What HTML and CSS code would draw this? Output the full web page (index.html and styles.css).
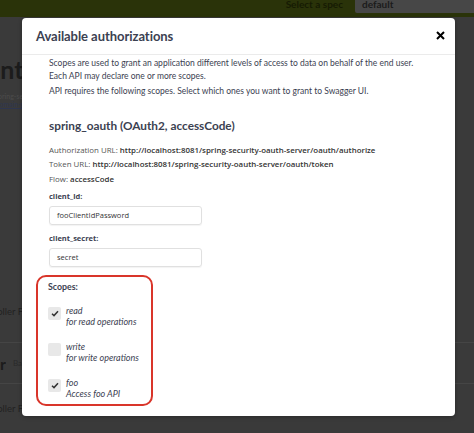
FILE: index.html
```html
<!DOCTYPE html>
<html lang="en">
<head>
<meta charset="utf-8">
<title>Available authorizations</title>
<link rel="stylesheet" href="styles.css">
</head>
<body>
<div class="page">
  <header class="topbar">
    <div class="spec">
      <span class="spec-label">Select a spec</span>
      <span class="spec-select">default</span>
    </div>
  </header>
  <main class="content">
    <section class="info">
      <h2 class="info-title">Maintenance</h2>
      <p class="info-base">[ Base URL: spring-security-oauth-resource/ ]</p>
      <a class="info-link">http://www.domain-page.com</a>
    </section>
    <section class="tags">
      <div class="tag tag-first"><span class="tag-desc">foo-controller Foo Controller</span></div>
      <div class="tag"><span class="tag-name">Reader</span><span class="tag-small">Bar Controller</span></div>
      <div class="tag tag-last"><span class="tag-desc">foo-controller Foo Controller</span></div>
    </section>
  </main>
</div>

<div class="modal">
  <div class="modal-header">
    <h3 class="modal-title">Available authorizations</h3>
    <button class="close" aria-label="close">
      <svg width="9" height="9" viewBox="0 0 9 9"><path d="M1 1 L8 8 M8 1 L1 8" stroke="#000" stroke-width="2" stroke-linecap="butt"/></svg>
    </button>
  </div>
  <div class="modal-body">
    <p class="desc">Scopes are used to grant an application different levels of access to data on behalf of the end user. Each API may declare one or more scopes.</p>
    <p class="desc desc-2">API requires the following scopes. Select which ones you want to grant to Swagger UI.</p>

    <h4 class="scheme">spring_oauth (OAuth2, accessCode)</h4>
    <p class="meta">Authorization URL: <code>http://localhost:8081/spring-security-oauth-server/oauth/authorize</code></p>
    <p class="meta">Token URL: <code>http://localhost:8081/spring-security-oauth-server/oauth/token</code></p>
    <p class="meta">Flow: <code>accessCode</code></p>

    <label class="field-label">client_id:</label>
    <div class="input">fooClientIdPassword</div>
    <label class="field-label">client_secret:</label>
    <div class="input">secret</div>

    <div class="scopes">
      <h5 class="scopes-title">Scopes:</h5>
      <div class="scope">
        <span class="check checked"><svg width="8" height="7" viewBox="0 0 8 7"><path d="M1 3.8 L3 5.6 L7 1.2" fill="none" stroke="#333" stroke-width="1.5"/></svg></span>
        <div class="scope-text"><span>read</span><span>for read operations</span></div>
      </div>
      <div class="scope">
        <span class="check"></span>
        <div class="scope-text"><span>write</span><span>for write operations</span></div>
      </div>
      <div class="scope">
        <span class="check checked"><svg width="8" height="7" viewBox="0 0 8 7"><path d="M1 3.8 L3 5.6 L7 1.2" fill="none" stroke="#333" stroke-width="1.5"/></svg></span>
        <div class="scope-text"><span>foo</span><span>Access foo API</span></div>
      </div>
    </div>
  </div>
</div>
</body>
</html>
```
FILE: styles.css
```css
* { box-sizing: border-box; }
html, body { margin: 0; padding: 0; }
body {
  width: 474px;
  height: 433px;
  overflow: hidden;
  background: #3a3a3a;
  font-family: "Lato", "Open Sans", sans-serif;
  position: relative;
}
.page { width: 474px; height: 433px; }
.topbar {
  height: 17px;
  background: #2a3309;
  display: flex;
  justify-content: flex-end;
}
.spec { display: flex; align-items: flex-start; height: 13px; }
.spec-label {
  font-size: 10px;
  font-weight: 700;
  color: #161b03;
  margin-right: 12px;
  line-height: 8px;
}
.spec-select {
  width: 119px;
  height: 13px;
  background: #474747;
  border-radius: 0 0 0 2px;
  color: #1b1b1b;
  font-size: 10px;
  font-weight: 700;
  line-height: 8px;
  padding-left: 7px;
}
.content { margin-left: -42px; }
.info { padding-top: 38px; }
.info-title {
  margin: 0;
  font-size: 25px;
  font-weight: 700;
  color: #1c1c1c;
  line-height: 28px;
}
.info-base {
  margin: 9px 0 0;
  font-size: 7px;
  color: #4c4c4c;
  line-height: 8px;
}
.info-link {
  display: block;
  font-size: 7px;
  color: #2e3650;
  text-decoration: underline;
  line-height: 8px;
}
.tags {
  position: absolute;
  left: -42px;
  top: 290px;
  width: 516px;
}
.tag {
  height: 41px;
  display: flex;
  align-items: center;
  border-bottom: 1px solid #454545;
}
.tag-first { height: 53px; align-items: flex-start; padding-top: 16px; }
.tag-last { height: 50px; border-bottom: 0; }
.tag-desc { font-size: 9.5px; color: #222; line-height: 12px; }
.tag-name {
  width: 48px;
  flex-shrink: 0;
  text-align: right;
  white-space: nowrap;
  overflow: hidden;
  direction: rtl;
  font-size: 16px;
  font-weight: 700;
  color: #1c1c1c;
  margin-right: 7px;
}
.tag-small { font-size: 8px; color: #2a2a2a; }

.modal {
  position: absolute;
  left: 22px;
  top: 18px;
  width: 433px;
  height: 398px;
  background: #fff;
  border-radius: 4px;
  box-shadow: 0 1px 4px rgba(0,0,0,0.3);
  color: #3b4151;
}
.modal-header {
  height: 37px;
  border-bottom: 1px solid #ebebeb;
  display: flex;
  align-items: center;
  justify-content: space-between;
  padding: 0 10px 0 14px;
}
.modal-title {
  margin: 0;
  font-size: 13px;
  font-weight: 700;
  letter-spacing: -0.05px;
  color: #3b4151;
}
.close {
  border: 0;
  background: none;
  padding: 0;
  width: 9px;
  height: 9px;
  display: flex;
  margin-top: -2px;
}
.modal-body { padding: 2px 27px 0; }
.desc {
  margin: 0;
  font-size: 8.5px;
  line-height: 13px;
  color: #3b4151;
  padding-right: 8px;
}
.desc-2 { margin-top: 2px; }
.scheme {
  margin: 20px 0 0;
  font-size: 11.8px;
  font-weight: 700;
  line-height: 16px;
  color: #3b4151;
}
.meta {
  margin: 0;
  font-family: "Open Sans", sans-serif;
  font-size: 7.9px;
  line-height: 14.8px;
  color: #555;
}
.scheme + .meta { margin-top: 8.5px; }
.meta code {
  font-family: "Open Sans", sans-serif;
  font-weight: 600;
  color: #333;
}
.field-label {
  display: block;
  font-family: "Open Sans", sans-serif;
  font-size: 7.5px;
  font-weight: 700;
  color: #3b4151;
  line-height: 10px;
  margin-top: 4.5px;
}
.input + .field-label { margin-top: 8px; }
.input {
  width: 153px;
  height: 19px;
  margin-top: 5px;
  border: 1px solid #e0e0e0;
  border-radius: 3px;
  box-shadow: 0 1px 1px rgba(0,0,0,0.05);
  font-family: "Open Sans", sans-serif;
  font-size: 7.5px;
  color: #333;
  line-height: 17px;
  padding-left: 7px;
}
.scopes {
  margin: 8px 0 0 -13px;
  width: 117px;
  height: 131px;
  border: 2px solid #d9352a;
  border-radius: 10px;
  padding: 4px 0 0 10px;
}
.scopes-title {
  margin: 0;
  font-size: 8.8px;
  font-weight: 700;
  color: #3b4151;
  line-height: 12px;
}
.scope {
  display: flex;
  align-items: flex-start;
  margin-top: 14px;
}
.scopes-title + .scope { margin-top: 11.5px; }
.check {
  width: 13px;
  height: 13px;
  background: #e8e8e8;
  border-radius: 2px;
  display: flex;
  align-items: center;
  justify-content: center;
  margin-right: 5px;
  margin-top: 2.5px;
}
.scope-text {
  display: flex;
  flex-direction: column;
  font-size: 9px;
  font-style: italic;
  line-height: 11px;
  color: #3b4151;
}
```
